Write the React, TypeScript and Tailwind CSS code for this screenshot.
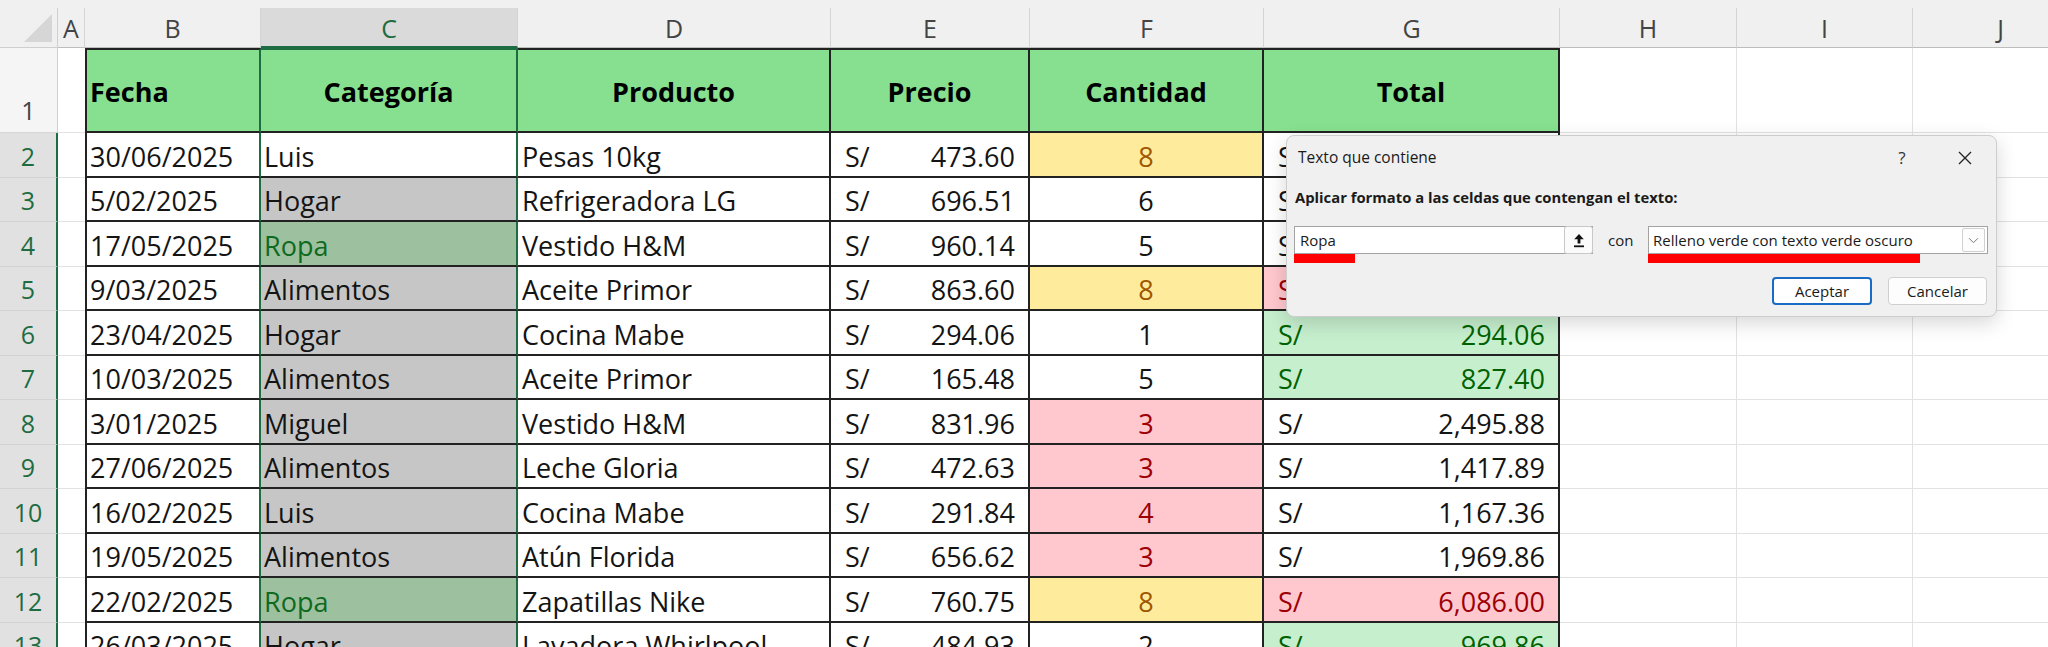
import React from "react";

type Tone = "none" | "yellow" | "red" | "green";

type Row = {
  n: number;
  date: string;
  cat: string;
  prod: string;
  price: string;
  qty: string;
  qt: Tone;
  total: string;
  tt: Tone;
};

const GRID = "grid grid-cols-[58px_27px_176px_257px_313px_199px_234px_296px_177px_176px_176px]";

const TONE: Record<Tone, string> = {
  none: "bg-white text-[#141414]",
  yellow: "bg-[#ffeb9c] text-[#9c5700]",
  red: "bg-[#ffc7ce] text-[#9c0006]",
  green: "bg-[#c6efce] text-[#006100]",
};

const rows: Row[] = [
  { n: 2, date: "30/06/2025", cat: "Luis", prod: "Pesas 10kg", price: "473.60", qty: "8", qt: "yellow", total: "3,788.80", tt: "none" },
  { n: 3, date: "5/02/2025", cat: "Hogar", prod: "Refrigeradora LG", price: "696.51", qty: "6", qt: "none", total: "4,179.06", tt: "none" },
  { n: 4, date: "17/05/2025", cat: "Ropa", prod: "Vestido H&M", price: "960.14", qty: "5", qt: "none", total: "4,800.70", tt: "none" },
  { n: 5, date: "9/03/2025", cat: "Alimentos", prod: "Aceite Primor", price: "863.60", qty: "8", qt: "yellow", total: "6,908.80", tt: "red" },
  { n: 6, date: "23/04/2025", cat: "Hogar", prod: "Cocina Mabe", price: "294.06", qty: "1", qt: "none", total: "294.06", tt: "green" },
  { n: 7, date: "10/03/2025", cat: "Alimentos", prod: "Aceite Primor", price: "165.48", qty: "5", qt: "none", total: "827.40", tt: "green" },
  { n: 8, date: "3/01/2025", cat: "Miguel", prod: "Vestido H&M", price: "831.96", qty: "3", qt: "red", total: "2,495.88", tt: "none" },
  { n: 9, date: "27/06/2025", cat: "Alimentos", prod: "Leche Gloria", price: "472.63", qty: "3", qt: "red", total: "1,417.89", tt: "none" },
  { n: 10, date: "16/02/2025", cat: "Luis", prod: "Cocina Mabe", price: "291.84", qty: "4", qt: "red", total: "1,167.36", tt: "none" },
  { n: 11, date: "19/05/2025", cat: "Alimentos", prod: "Atún Florida", price: "656.62", qty: "3", qt: "red", total: "1,969.86", tt: "none" },
  { n: 12, date: "22/02/2025", cat: "Ropa", prod: "Zapatillas Nike", price: "760.75", qty: "8", qt: "yellow", total: "6,086.00", tt: "red" },
  { n: 13, date: "26/03/2025", cat: "Hogar", prod: "Lavadora Whirlpool", price: "484.93", qty: "2", qt: "none", total: "969.86", tt: "green" },
];

const letters = ["A", "B", "C", "D", "E", "F", "G", "H", "I", "J"];

function EmptyCells() {
  return (
    <>
      <div className="border-b border-r border-[#e2e2e2] bg-white" />
      <div className="border-b border-r border-[#e2e2e2] bg-white" />
      <div className="border-b border-r border-[#e2e2e2] bg-white" />
    </>
  );
}

function ColumnHeaders() {
  return (
    <div className={`${GRID} h-[40px] text-[25px] leading-none`}>
      <div className="flex items-end justify-end border-b border-r border-[#cfcfcf] bg-[#f0f0f0] pb-[4px] pr-[4px]">
        <svg width="29" height="29" viewBox="0 0 29 29" aria-hidden="true">
          <polygon points="28,0 28,28 0,28" fill="#d6d6d6" />
        </svg>
      </div>
      {letters.map((l) =>
        l === "C" ? (
          <div
            key={l}
            className="flex items-center justify-center border-r border-r-[#d4d4d4] border-b-2 border-b-[#1e6c41] bg-[#dadada] pt-[2px] text-[#1e6c41]"
          >
            {l}
          </div>
        ) : (
          <div
            key={l}
            className="flex items-center justify-center border-r border-r-[#d4d4d4] border-b border-b-[#bdbdbd] bg-[#f0f0f0] pt-[2px] text-[#444]"
          >
            {l}
          </div>
        )
      )}
    </div>
  );
}

function HeaderRow() {
  return (
    <div className={`${GRID} h-[85px] leading-none`}>
      <div className="flex items-end justify-center border-b border-b-[#d6d6d6] border-r border-r-[#d0d0d0] bg-[#f5f5f5] pb-[9px] text-[25px] text-[#444]">
        1
      </div>
      <div className="border-b border-b-[#e2e2e2] bg-white" />
      <div className="flex items-center border-t-2 border-t-[#222] border-l-2 border-l-[#222] border-b-2 border-b-[#222] border-r-2 border-r-[#1e6c41] bg-[#86e08f] pl-[3px] pt-[2px] font-bold">
        Fecha
      </div>
      <div className="flex items-center justify-center border-t-2 border-t-[#1e6c41] border-b-2 border-b-[#222] border-r-2 border-r-[#1e6c41] bg-[#86e08f] pt-[2px] font-bold">
        Categoría
      </div>
      <div className="flex items-center justify-center border-t-2 border-b-2 border-r-2 border-[#222] bg-[#86e08f] pt-[2px] font-bold">
        Producto
      </div>
      <div className="flex items-center justify-center border-t-2 border-b-2 border-r-2 border-[#222] bg-[#86e08f] pt-[2px] font-bold">
        Precio
      </div>
      <div className="flex items-center justify-center border-t-2 border-b-2 border-r-2 border-[#222] bg-[#86e08f] pt-[2px] font-bold">
        Cantidad
      </div>
      <div className="flex items-center justify-center border-t-2 border-b-2 border-r-2 border-[#222] bg-[#86e08f] pt-[2px] font-bold">
        Total
      </div>
      <EmptyCells />
    </div>
  );
}

function DataRow({ r }: { r: Row }) {
  const catCls =
    r.cat === "Ropa"
      ? "bg-[#9dc09f] text-[#0d6a1f]"
      : r.n === 2
        ? "bg-white text-[#141414]"
        : "bg-[#c6c6c6] text-[#141414]";

  return (
    <div className={`${GRID} h-[44.5px] leading-none`}>
      <div className="flex items-center justify-center border-b border-b-[#d2d2d2] border-r-2 border-r-[#1e6c41] bg-[#e1e1e1] pt-[3px] text-[25px] text-[#1e6c41]">
        {r.n}
      </div>
      <div className="border-b border-b-[#e2e2e2] bg-white" />
      <div className="flex items-center border-l-2 border-l-[#222] border-b-2 border-b-[#222] border-r-2 border-r-[#1e6c41] bg-white pl-[3px] pt-[4px] text-[#141414]">
        {r.date}
      </div>
      <div className={`flex items-center border-b-2 border-b-[#222] border-r-2 border-r-[#1e6c41] pl-[3px] pt-[4px] ${catCls}`}>
        {r.cat}
      </div>
      <div className="flex items-center border-b-2 border-r-2 border-[#222] bg-white pl-[4px] pt-[4px] text-[#141414]">
        {r.prod}
      </div>
      <div className="flex items-center justify-between border-b-2 border-r-2 border-[#222] bg-white pl-[14px] pr-[13px] pt-[4px] text-[#141414]">
        <span>S/</span>
        <span>{r.price}</span>
      </div>
      <div className={`flex items-center justify-center border-b-2 border-r-2 border-[#222] pt-[4px] ${TONE[r.qt]}`}>
        {r.qty}
      </div>
      <div className={`flex items-center justify-between border-b-2 border-r-2 border-[#222] pl-[14px] pr-[13px] pt-[4px] ${TONE[r.tt]}`}>
        <span>S/</span>
        <span>{r.total}</span>
      </div>
      <EmptyCells />
    </div>
  );
}

function UploadIcon() {
  return (
    <svg width="12" height="15" viewBox="0 0 12 15" aria-hidden="true">
      <path d="M6 1 L1.2 6.2 H4.6 V10.5 H7.4 V6.2 H10.8 Z" fill="#111" />
      <rect x="1" y="12.4" width="10" height="1.8" fill="#111" />
    </svg>
  );
}

function Dialog() {
  return (
    <div className="absolute left-[1286px] top-[135px] flex h-[182px] w-[711px] flex-col rounded-[8px] border border-[#cdcdcd] bg-[#f0f0f0] font-['Open_Sans',sans-serif] text-[#1a1a1a] shadow-[0_6px_20px_rgba(0,0,0,0.16)]">
      <div className="flex h-[43px] items-center pl-[11px] pr-[24px]">
        <span className="text-[15.5px]">Texto que contiene</span>
        <div className="flex-1" />
        <span className="w-[20px] text-center text-[17px] text-[#333]">?</span>
        <svg className="ml-[46px]" width="14" height="14" viewBox="0 0 14 14" aria-hidden="true">
          <path d="M1 1 L13 13 M13 1 L1 13" stroke="#222" strokeWidth="1.3" />
        </svg>
      </div>

      <div className="mt-[8px] pl-[8px] text-[14.8px] font-bold leading-[20px]">
        Aplicar formato a las celdas que contengan el texto:
      </div>

      <div className="mt-[19px] flex items-start pl-[7px]">
        <div className="flex flex-col">
          <div className="flex h-[28px] w-[299px] items-center border border-[#a3a3a3] bg-white">
            <span className="flex-1 pl-[5px] text-[15px]">Ropa</span>
            <div className="-mr-px flex h-[28px] w-[29px] items-center justify-center rounded-[3px] border border-[#c9c9c9] bg-[#fbfbfb]">
              <UploadIcon />
            </div>
          </div>
          <div className="h-[9px] w-[61px] bg-[#ff0000]" />
        </div>

        <div className="flex h-[28px] w-[55px] items-center pl-[15px] text-[15px]">con</div>

        <div className="flex flex-col">
          <div className="flex h-[28px] w-[340px] items-center border border-[#a3a3a3] bg-white">
            <span className="flex-1 pl-[4px] text-[15px]">Relleno verde con texto verde oscuro</span>
            <div className="mr-[2px] flex h-[24px] w-[23px] items-center justify-center rounded-[2px] border border-[#d0d0d0] bg-[#fdfdfd]">
              <svg width="11" height="7" viewBox="0 0 11 7" aria-hidden="true">
                <path d="M1 1.2 L5.5 5.7 L10 1.2" stroke="#7a7a7a" strokeWidth="1" fill="none" />
              </svg>
            </div>
          </div>
          <div className="h-[9px] w-[272px] bg-[#ff0000]" />
        </div>
      </div>

      <div className="mt-[14px] flex justify-end gap-[16px] pr-[9px]">
        <button className="flex h-[28px] w-[100px] items-center justify-center rounded-[4px] border-2 border-[#1a6bc4] bg-white text-[15px]">
          Aceptar
        </button>
        <button className="flex h-[28px] w-[99px] items-center justify-center rounded-[4px] border border-[#cfcfcf] bg-[#fdfdfd] text-[15px]">
          Cancelar
        </button>
      </div>
    </div>
  );
}

export default function App() {
  return (
    <div className="relative h-[647px] w-[2048px] overflow-hidden bg-white font-['Open_Sans',sans-serif] text-[27px]">
      <div className="h-[8px] bg-[#f0f0f0]" />
      <ColumnHeaders />
      <HeaderRow />
      {rows.map((r) => (
        <DataRow key={r.n} r={r} />
      ))}
      <Dialog />
    </div>
  );
}
